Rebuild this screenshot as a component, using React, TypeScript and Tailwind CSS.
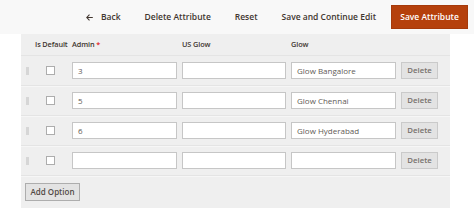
import React from "react";

const rows = [
  { admin: "3", us: "", glow: "Glow Bangalore" },
  { admin: "5", us: "", glow: "Glow Chennai" },
  { admin: "6", us: "", glow: "Glow Hyderabad" },
  { admin: "", us: "", glow: "" },
];

function Input({ value }: { value: string }) {
  return (
    <div className="h-[17px] bg-white border border-[#c6c6c6] flex items-center px-[5px] text-[8px] text-[#5f5a56] leading-none">
      {value}
    </div>
  );
}

export default function App() {
  return (
    <div
      className="w-[474px] h-[220px] bg-white overflow-hidden"
      style={{ fontFamily: '"Open Sans", "Liberation Sans", sans-serif' }}
    >
      <div className="h-[34px] bg-[#f8f8f8] flex items-center justify-end pr-[6px] text-[8.5px] font-semibold text-[#41362f]">
        <div className="flex items-center gap-[8px] mr-[24px]">
          <svg width="7" height="7" viewBox="0 0 7 7" className="mt-[1px]">
            <path d="M0.8 3.5 H6.8 M3.5 0.6 L0.8 3.5 L3.5 6.4" fill="none" stroke="#41362f" strokeWidth="1.1" />
          </svg>
          <span>Back</span>
        </div>
        <span className="mr-[24px]">Delete Attribute</span>
        <span className="mr-[24px]">Reset</span>
        <span className="mr-[15px]">Save and Continue Edit</span>
        <div className="h-[24px] w-[77px] bg-[#b5400c] border border-[#a5390a] text-white flex items-center justify-center">
          Save Attribute
        </div>
      </div>
      <div className="ml-[21px] w-[429px] h-[174px] bg-[#efefef] flex flex-col">
        <div className="h-[22px] flex items-center border-b border-[#e4e4e4] text-[7.3px] font-semibold text-[#41362f] tracking-[-0.1px]">
          <div className="w-[14px]" />
          <div className="w-[37px] whitespace-nowrap">Is Default</div>
          <div className="w-[110px]">
            Admin <span className="text-[#e22626]">*</span>
          </div>
          <div className="w-[109px]">US Glow</div>
          <div>Glow</div>
        </div>
        {rows.map((r, i) => (
          <div
            key={i}
            className="h-[30px] flex items-center border-b border-[#e4e4e4] shadow-[0_1px_0_#f6f6f6]"
          >
            <div className="w-[14px] pl-[5px]">
              <div className="w-[3px] h-[8px] bg-[#d6d6d6]" />
            </div>
            <div className="w-[37px] pl-[11px]">
              <div className="w-[9px] h-[9px] bg-white border border-[#adadad]" />
            </div>
            <div className="w-[105px] mr-[5px]">
              <Input value={r.admin} />
            </div>
            <div className="w-[104px] mr-[5px]">
              <Input value={r.us} />
            </div>
            <div className="w-[105px] mr-[5px]">
              <Input value={r.glow} />
            </div>
            <div className="w-[37px] h-[17px] bg-[#e3e3e3] border border-[#cacaca] flex items-center justify-center text-[7.8px] font-semibold text-[#77706b]">
              Delete
            </div>
          </div>
        ))}
        <div className="pl-[4px] pt-[7px]">
          <div className="w-[55px] h-[18px] bg-[#e3e3e3] border border-[#adadad] flex items-center justify-center text-[8px] font-semibold text-[#514943]">
            Add Option
          </div>
        </div>
      </div>
    </div>
  );
}
